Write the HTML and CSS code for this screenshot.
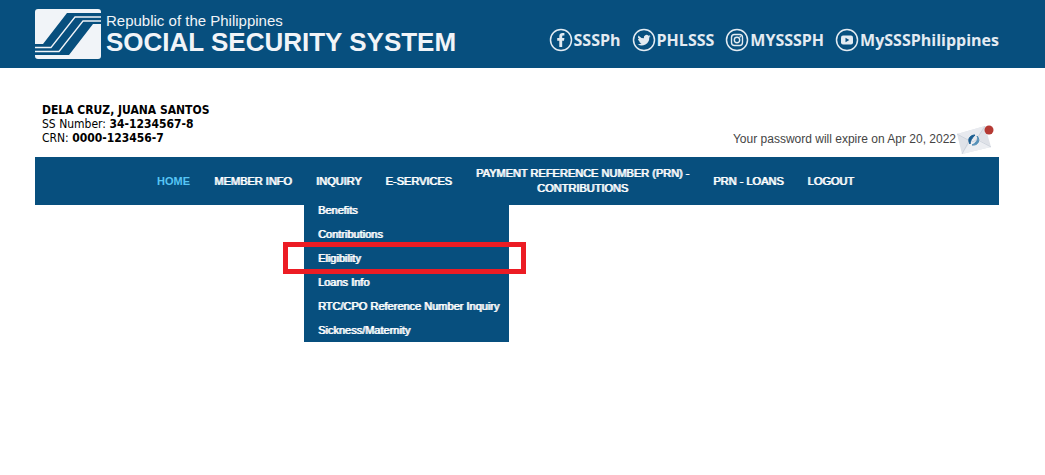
FILE: index.html
```
<!DOCTYPE html>
<html lang="en">
<head>
    <meta charset="UTF-8">
    <meta name="viewport" content="width=device-width, initial-scale=1.0">
    <title>Social Security System</title>
    <link rel="stylesheet" href="styles.css">
</head>
<body>

    <!-- Top banner -->
    <header class="banner">
        <a class="brand" href="#">
            <svg class="logo" viewBox="0 0 66 50" aria-hidden="true">
                <rect width="66" height="50" rx="3" fill="#f1f4f8"/>
                <path d="M0 35H8L32 4H66V15H58L34 46H0Z" fill="#074f7e"/>
                <path d="M0 38.500H16L40 8H66M0 42.500H24L48 12H66" fill="none" stroke="#f1f4f8" stroke-width="1.300"/>
            </svg>
            <span class="brand-text">
                <span class="republic">Republic of the Philippines</span>
                <span class="system">SOCIAL SECURITY SYSTEM</span>
            </span>
        </a>
        <div class="social">
            <a href="#">
                <svg viewBox="0 0 24 24" aria-hidden="true">
                    <circle cx="12" cy="12" r="10.500" fill="none" stroke="#e3ebf2" stroke-width="1.500"/>
                    <path d="M10.300 19V12.800H8.200V10H10.300V8.200C10.300 6 11.600 5 13.500 5H15.400V7.600H14.200C13.500 7.600 13.200 8 13.200 8.600V10H15.400L15 12.800H13.200V19Z" fill="#e3ebf2"/>
                </svg>
                SSSPh
            </a>
            <a href="#">
                <svg viewBox="0 0 24 24" aria-hidden="true">
                    <circle cx="12" cy="12" r="10.500" fill="none" stroke="#e3ebf2" stroke-width="1.500"/>
                    <path d="M18.500 8.100c-.5.200-1 .4-1.500.4.600-.3 1-.8 1.200-1.400-.6.300-1.100.5-1.700.6a2.700 2.700 0 0 0-4.600 2.500A7.600 7.600 0 0 1 6.400 7.400a2.700 2.700 0 0 0 .8 3.600c-.4 0-.8-.1-1.200-.3 0 1.300.9 2.400 2.200 2.600-.4.100-.8.100-1.200 0 .3 1.100 1.300 1.900 2.500 1.900A5.400 5.400 0 0 1 5.500 16.300 7.700 7.700 0 0 0 17.300 9.500c.5-.4.900-.8 1.200-1.400z" fill="#e3ebf2"/>
                </svg>
                PHLSSS
            </a>
            <a href="#">
                <svg viewBox="0 0 24 24" aria-hidden="true">
                    <circle cx="12" cy="12" r="10.500" fill="none" stroke="#e3ebf2" stroke-width="1.500"/>
                    <rect x="6.500" y="6.500" width="11" height="11" rx="3" fill="none" stroke="#e3ebf2" stroke-width="1.400"/>
                    <circle cx="12" cy="12" r="2.700" fill="none" stroke="#e3ebf2" stroke-width="1.400"/>
                    <circle cx="15.200" cy="8.800" r=".8" fill="#e3ebf2"/>
                </svg>
                MYSSSPH
            </a>
            <a href="#">
                <svg viewBox="0 0 24 24" aria-hidden="true">
                    <circle cx="12" cy="12" r="10.500" fill="none" stroke="#e3ebf2" stroke-width="1.500"/>
                    <rect x="6" y="7.500" width="12" height="9" rx="2" fill="#e3ebf2"/>
                    <path d="M10.500 9.800V14.200L14.300 12Z" fill="#074f7e"/>
                </svg>
                MySSSPhilippines
            </a>
        </div>
    </header>

    <main class="page">
        <!-- Member details -->
        <section class="member">
            <div class="details">
                <strong>DELA CRUZ, JUANA SANTOS</strong>
                <span>SS Number: <strong>34-1234567-8</strong></span>
                <span>CRN: <strong>0000-123456-7</strong></span>
            </div>
            <div class="notice">
                <span>Your password will expire on Apr 20, 2022</span>
                <a href="#" aria-label="Messages">
                    <svg class="mail" viewBox="0 0 40 32" aria-hidden="true">
                        <path d="M1 11L29 3L35 24L6 31Z" fill="#dfe2e8"/>
                        <path d="M6 31L15 18L22 16L35 24Z" fill="#eceef2"/>
                        <path d="M1 11L29 3L20 17Q17 20 14 18Z" fill="#e8eaef"/>
                        <path d="M1 11L14 18Q17 20 20 17L29 3M6 31L13 18M35 24L22 17" fill="none" stroke="#c8ced8" stroke-width=".8"/>
                        <path d="M19 12C14 12 11 16 14 21C14 18 16 15 19 12Z" fill="#195d91" stroke="#195d91"/>
                        <path d="M21 13C23 16 20 20 16 22C22 23 25 17 21 13Z" fill="#5590b8" stroke="#5590b8"/>
                        <circle cx="33" cy="7" r="4.500" fill="#b53a34"/>
                    </svg>
                </a>
            </div>
        </section>

        <!-- Main menu -->
        <nav class="nav">
            <ul class="menu">
                <li><a class="active" href="#">HOME</a></li>
                <li><a href="#">MEMBER INFO</a></li>
                <li class="open">
                    <a href="#">INQUIRY</a>
                    <ul class="submenu">
                        <li><a href="#">Benefits</a></li>
                        <li><a href="#">Contributions</a></li>
                        <li class="marked"><a href="#">Eligibility</a></li>
                        <li><a href="#">Loans Info</a></li>
                        <li><a href="#">RTC/CPO Reference Number Inquiry</a></li>
                        <li><a href="#">Sickness/Maternity</a></li>
                    </ul>
                </li>
                <li><a href="#">E-SERVICES</a></li>
                <li><a href="#">PAYMENT REFERENCE NUMBER (PRN) -<br>CONTRIBUTIONS</a></li>
                <li><a href="#">PRN - LOANS</a></li>
                <li><a href="#">LOGOUT</a></li>
            </ul>
        </nav>
    </main>

</body>
</html>
```
FILE: styles.css
```
* { margin: 0; padding: 0; box-sizing: border-box; }
body { min-height: 100vh; background: #fff; color: #000; font-family: "Liberation Sans", Arial, sans-serif; }
a { color: inherit; text-decoration: none; }
ul { list-style: none; }
svg { display: block; flex: none; }

/* Banner */
.banner {
    display: flex; justify-content: space-between; align-items: center;
    height: 68px; padding: 0 46px 0 35px; background: #074f7e;
}
.brand { display: flex; align-items: center; gap: 5px; color: #f1f4f8; white-space: nowrap; }
.logo { width: 66px; height: 50px; }
.brand-text { display: flex; flex-direction: column; }
.republic { font-size: 15px; line-height: 16px; }
.system { font-size: 26px; line-height: 26px; font-weight: bold; }

.social { display: flex; gap: 11px; padding-top: 12px; font-family: "Open Sans", sans-serif; font-size: 16px; line-height: 24px; font-weight: bold; }
.social a { display: flex; align-items: center; gap: 1px; color: #e3ebf2; }
.social svg { width: 24px; height: 24px; }

/* Member details */
.page { padding: 0 46px 0 35px; }
.member { display: flex; justify-content: space-between; align-items: flex-end; height: 89px; }
.details {
    display: flex; flex-direction: column; padding: 0 0 12px 7px;
    font-family: "DejaVu Sans Condensed", "DejaVu Sans", sans-serif; font-size: 12px; line-height: 14px;
}
.notice { display: flex; align-items: center; padding: 0 3px 2px 0; font-size: 12px; color: #444; }
.mail { width: 40px; height: 32px; }

/* Main menu */
.nav { background: #074f7e; padding-left: 122px; color: #fff; font-size: 11px; text-shadow: 1px 0 #fff; }
.menu { display: flex; align-items: center; gap: 24px; height: 48px; line-height: 15px; text-align: center; white-space: nowrap; }
.active { color: #56c5f5; font-weight: bold; text-shadow: none; }
.open { position: relative; }

.submenu {
    position: absolute; top: 24px; left: -12px; z-index: 1;
    background: #074f7e; padding: 0 10px 0 14px; text-align: left; line-height: 24px;
}
.submenu a { display: block; }

/* Red frame round the marked item */
.marked { position: relative; }
.marked::after {
    content: ""; position: absolute; top: -4px; bottom: -4px; left: -35px; right: -27px;
    border: 5px solid #ec1c24; pointer-events: none;
}
```
